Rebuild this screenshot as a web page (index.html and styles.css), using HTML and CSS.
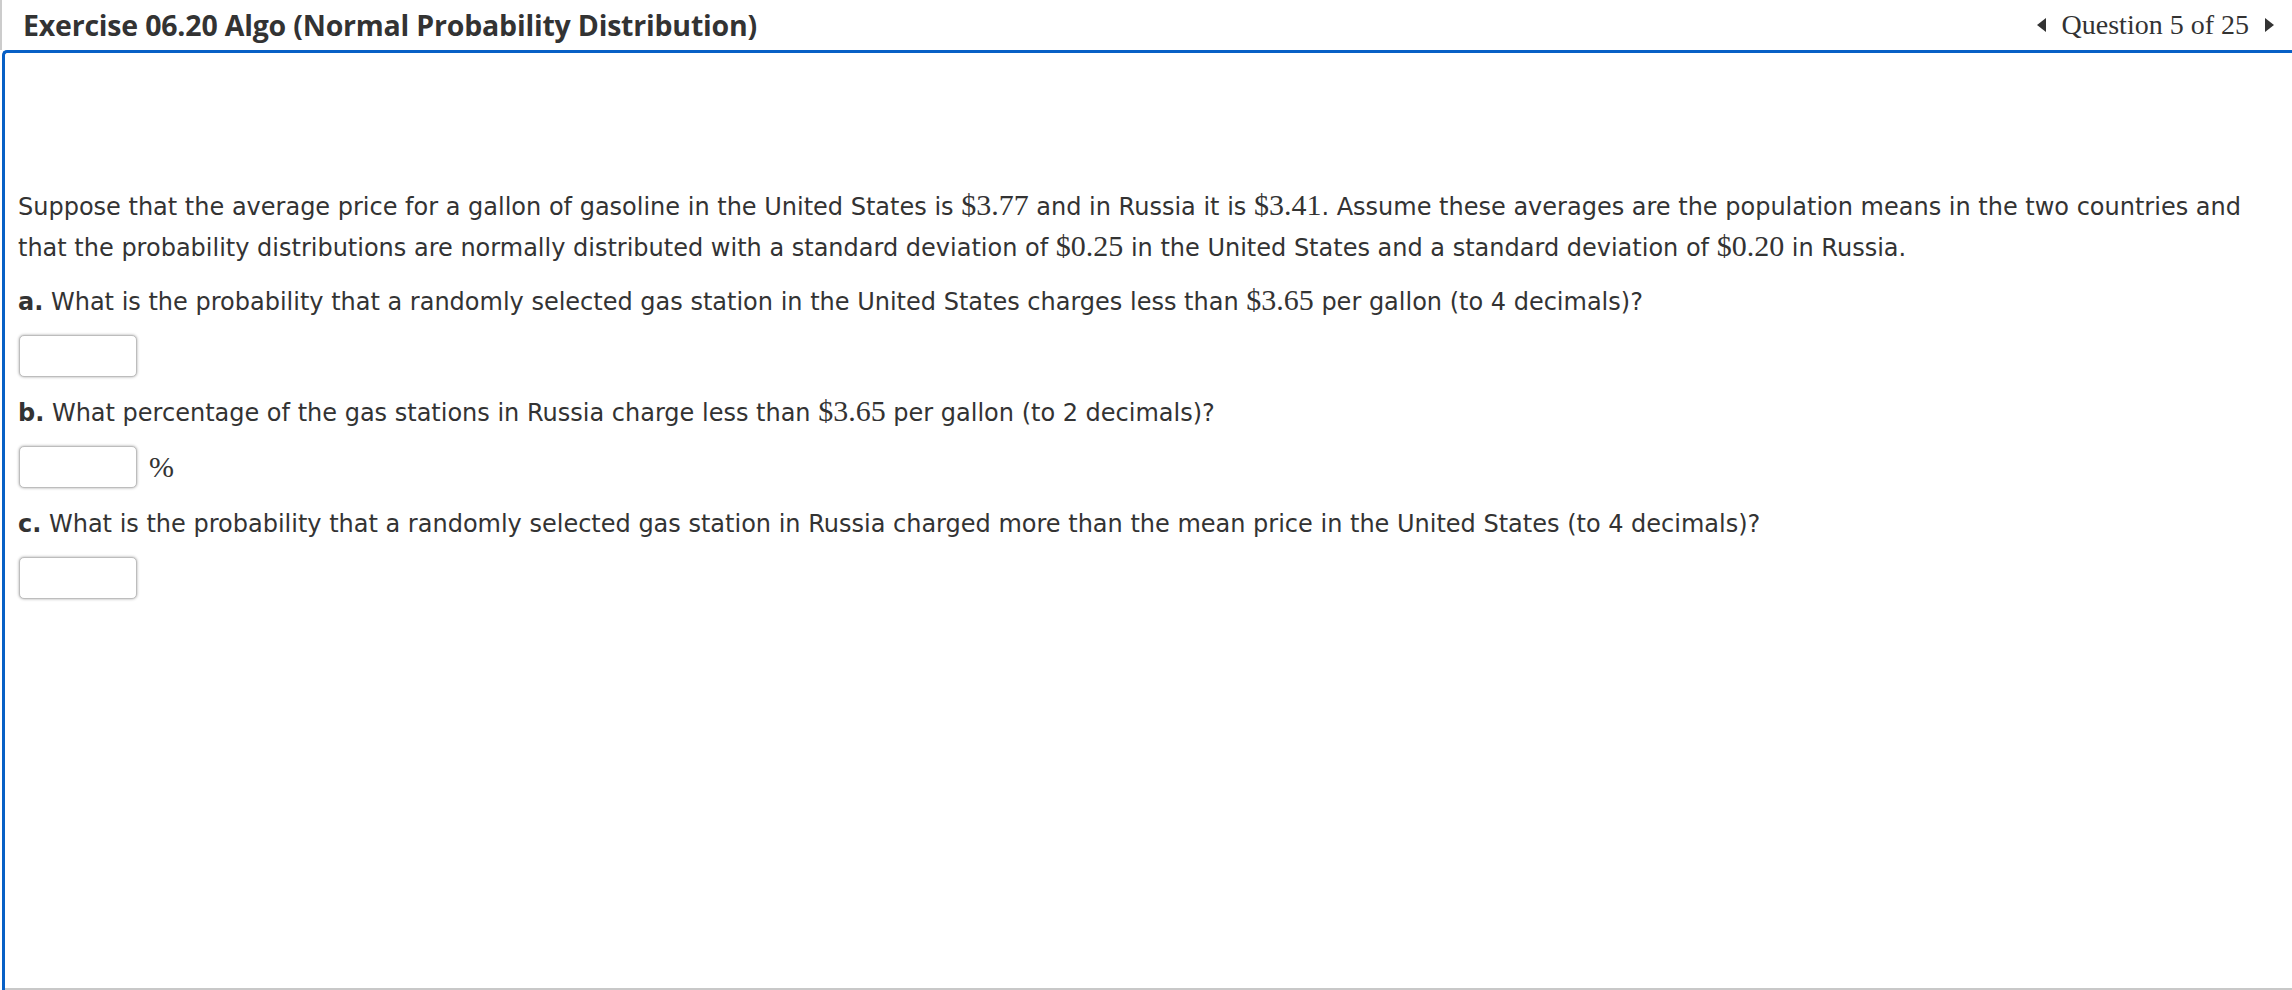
FILE: index.html
```html
<!DOCTYPE html>
<html>
<head>
<meta charset="utf-8">
<title>Exercise 06.20 Algo</title>
<link rel="stylesheet" href="styles.css">
</head>
<body>
<div class="header">
  <h1 class="title">Exercise 06.20 Algo (Normal Probability Distribution)</h1>
  <div class="nav">
    <svg class="arrow" width="9" height="14" viewBox="0 0 9 14"><path d="M9 0 L0 7 L9 14 Z" fill="#333"/></svg>
    <span class="qnum">Question 5 of 25</span>
    <svg class="arrow" width="9" height="14" viewBox="0 0 9 14"><path d="M0 0 L9 7 L0 14 Z" fill="#333"/></svg>
  </div>
</div>
<div class="panel">
  <div class="content">
    <p class="intro">Suppose that the average price for a gallon of gasoline in the United States is <span class="m">$3.77</span> and in Russia it is <span class="m">$3.41</span>. Assume these averages are the population means in the two countries and that the probability distributions are normally distributed with a standard deviation of <span class="m">$0.25</span> in the United States and a standard deviation of <span class="m">$0.20</span> in Russia.</p>
    <p class="q"><b>a.</b> What is the probability that a randomly selected gas station in the United States charges less than <span class="m">$3.65</span> per gallon (to 4 decimals)?</p>
    <div class="answer"><span class="box"></span></div>
    <p class="q"><b>b.</b> What percentage of the gas stations in Russia charge less than <span class="m">$3.65</span> per gallon (to 2 decimals)?</p>
    <div class="answer"><span class="box"></span><span class="pct">%</span></div>
    <p class="q"><b>c.</b> What is the probability that a randomly selected gas station in Russia charged more than the mean price in the United States (to 4 decimals)?</p>
    <div class="answer"><span class="box"></span></div>
  </div>
</div>
</body>
</html>
```
FILE: styles.css
```css
html, body {
  margin: 0;
  padding: 0;
  background: #fff;
}
body {
  width: 2292px;
  height: 990px;
  overflow: hidden;
  color: #333;
  font-family: "DejaVu Sans", Verdana, sans-serif;
}
.header {
  height: 50px;
  display: flex;
  justify-content: space-between;
  align-items: center;
  border-left: 2px solid #ccc;
  box-sizing: border-box;
}
.title {
  margin: 0 0 0 21px;
  font-family: "Open Sans", sans-serif;
  font-weight: 700;
  font-size: 28.5px;
  letter-spacing: -0.2px;
  color: #333;
  line-height: 1;
}
.nav {
  display: flex;
  align-items: center;
  gap: 16px;
  margin-right: 18px;
}
.qnum {
  font-family: "Liberation Serif", serif;
  font-size: 28px;
  color: #333;
  line-height: 1;
}
.arrow {
  display: block;
}
.panel {
  margin-left: 2px;
  height: 940px;
  box-sizing: border-box;
  border-top: 3px solid #0760c6;
  border-left: 3px solid #0760c6;
  border-top-left-radius: 5px;
}
.content {
  height: 100%;
  box-sizing: border-box;
  border-bottom: 2px solid #c8c8c8;
  padding: 134px 20px 0 13px;
  font-size: 24px;
  line-height: 41px;
}
p {
  margin: 0;
}
.intro {
  margin-bottom: 13px;
}
.q {
  margin-bottom: 12px;
}
.q b {
  font-weight: 700;
}
.m {
  font-family: "Liberation Serif", serif;
  font-size: 30px;
  line-height: 1;
}
.answer {
  display: flex;
  align-items: center;
  gap: 12px;
  margin-bottom: 16px;
  padding-left: 1px;
}
.box {
  display: block;
  width: 118px;
  height: 42px;
  box-sizing: border-box;
  border: 1px solid #bdbdbd;
  border-radius: 5px;
  box-shadow: 0 0 3px rgba(0, 0, 0, 0.35);
  background: #fff;
}
.pct {
  font-family: "Liberation Serif", serif;
  font-size: 30px;
  line-height: 1;
}
```
